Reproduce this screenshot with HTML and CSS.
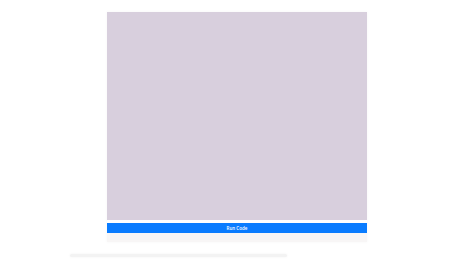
FILE: index.html
```html
<!DOCTYPE html>
<html>
<head>
<meta charset="utf-8">
<link rel="stylesheet" href="styles.css">
</head>
<body>
<div class="page">
  <div class="panel">
    <div class="canvas"></div>
    <button class="run">Run Code</button>
    <div class="output"></div>
  </div>
  <div class="below"></div>
</div>
</body>
</html>
```
FILE: styles.css
```css
html, body {
  margin: 0;
  padding: 0;
  background: #ffffff;
  font-family: "Open Sans", "Liberation Sans", sans-serif;
}
.page {
  width: 474px;
  height: 259px;
  overflow: hidden;
  padding-top: 12px;
  box-sizing: border-box;
  display: flex;
  flex-direction: column;
  align-items: center;
}
.panel {
  width: 260px;
  display: flex;
  flex-direction: column;
  box-shadow: 0 0 3px rgba(0,0,0,0.04);
}
.canvas {
  height: 208px;
  background: #d8cfdd;
}
.run {
  margin-top: 3px;
  height: 10px;
  border: none;
  padding: 0;
  background: #0a7cff;
  color: #ffffff;
  font-family: "Open Sans", "Liberation Sans", sans-serif;
  font-size: 4.5px;
  font-weight: 600;
  line-height: 10px;
}
.output {
  height: 9px;
  background: #f8f6f6;
}
.below {
  align-self: flex-start;
  margin-left: 70px;
  margin-top: 12px;
  width: 217px;
  height: 3px;
  border-radius: 2px;
  background: #f3f3f3;
  box-shadow: 0 0 3px rgba(0,0,0,0.05);
}
```
